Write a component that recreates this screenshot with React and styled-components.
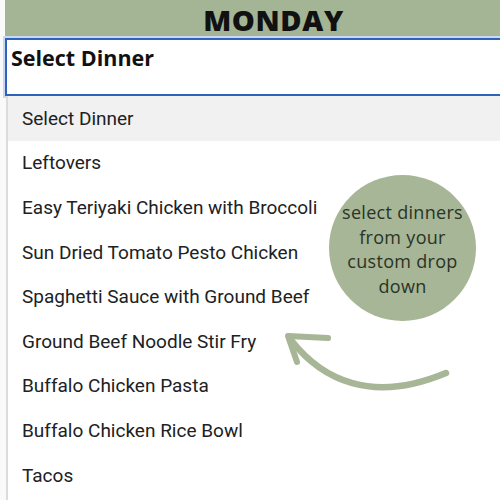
import React from 'react';
import styled, { createGlobalStyle } from 'styled-components';

const Global = createGlobalStyle`
  html, body { margin: 0; padding: 0; background: #fff; overflow: hidden; }
  #root { width: 500px; height: 500px; }
`;

const Page = styled.div`
  position: relative;
  width: 500px;
  height: 500px;
  overflow: hidden;
  background: #fafafa;
  display: flex;
  flex-direction: column;
`;

const Header = styled.div`
  margin-left: 5px;
  height: 36px;
  background: #a3b594;
  display: flex;
  align-items: center;
  justify-content: center;
  padding: 2px 0 0 42px;
  box-sizing: border-box;
  font-family: 'Open Sans', sans-serif;
  font-weight: 800;
  font-size: 29px;
  line-height: 1;
  letter-spacing: 0.6px;
  color: #111;
`;

const SelectBox = styled.div`
  margin: 2px -20px 0 5px;
  height: 51px;
  border: 2px solid #2f62bd;
  box-shadow: 0 0 0 2px #c9d9f3;
  background: #fff;
  padding: 3px 4px 0;
  font-family: 'Open Sans', sans-serif;
  font-weight: 700;
  font-size: 21.5px;
  color: #111;
`;

const List = styled.ul`
  list-style: none;
  margin: 0 0 0 6px;
  padding: 0;
  flex: 1;
  background: #fff;
  border-left: 2px solid #dcdcdc;
`;

const Item = styled.li`
  height: 44.6px;
  display: flex;
  align-items: center;
  padding-left: 14px;
  font-family: Roboto, 'Liberation Sans', sans-serif;
  font-size: 19px;
  color: #202124;
  background: ${(p) => (p.$active ? '#f1f1f1' : '#fff')};
`;

const Bubble = styled.div`
  position: absolute;
  left: 329px;
  top: 175px;
  width: 147px;
  height: 146px;
  border-radius: 50%;
  background: #a6b696;
  display: flex;
  align-items: center;
  justify-content: center;
  text-align: center;
  font-family: 'Open Sans', sans-serif;
  font-size: 18px;
  letter-spacing: 0.3px;
  line-height: 24.5px;
  padding-top: 2px;
  box-sizing: border-box;
  color: #2a3326;
`;

const Arrow = styled.svg`
  position: absolute;
  left: 0;
  top: 0;
  pointer-events: none;
`;

const dinners = [
  'Select Dinner',
  'Leftovers',
  'Easy Teriyaki Chicken with Broccoli',
  'Sun Dried Tomato Pesto Chicken',
  'Spaghetti Sauce with Ground Beef',
  'Ground Beef Noodle Stir Fry',
  'Buffalo Chicken Pasta',
  'Buffalo Chicken Rice Bowl',
  'Tacos',
];

const App = () => (
  <Page>
    <Global />
    <Header>MONDAY</Header>
    <SelectBox>Select Dinner</SelectBox>
    <List>
      {dinners.map((name, i) => (
        <Item key={name} $active={i === 0}>{name}</Item>
      ))}
    </List>
    <Bubble>
      select dinners
      <br />
      from your
      <br />
      custom drop
      <br />
      down
    </Bubble>
    <Arrow width="500" height="500" viewBox="0 0 500 500">
      <g fill="none" stroke="#a6b696" strokeLinecap="round" strokeLinejoin="round">
        <path d="M291 340 C322 380 372 404 446 373" strokeWidth="6.5" />
        <path d="M328 338 L288 336 L297 362" strokeWidth="6" />
      </g>
    </Arrow>
  </Page>
);

export default App;
